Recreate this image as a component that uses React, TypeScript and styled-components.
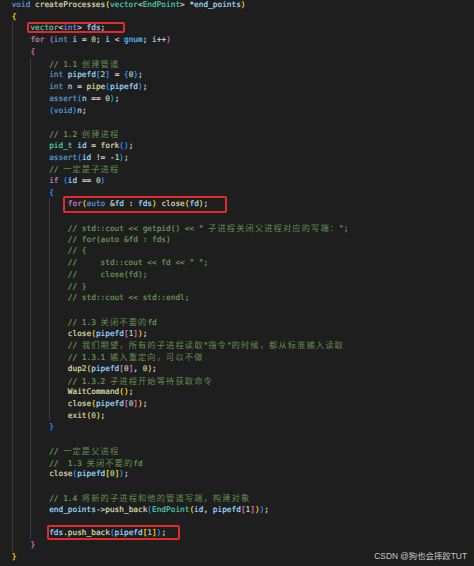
import React from "react";
import styled, { createGlobalStyle } from "styled-components";

const Global = createGlobalStyle`
  html, body { margin: 0; padding: 0; background: #1e1e1e; }
  #root { width: 474px; height: 566px; }
`;

const LH = 11.74;
const CH = 4.68;

const COLORS: Record<string, string> = {
  p: "#d4d4d4",
  k: "#569cd6",
  c: "#c586c0",
  f: "#dcdcaa",
  v: "#9cdcfe",
  t: "#4ec9b0",
  n: "#b5cea8",
  g: "#6a9955",
  m: "#569cd6",
  o: "#4fc1ff",
  "1": "#ffd700",
  "2": "#da70d6",
  "3": "#179fff",
};

const Editor = styled.div`
  position: relative;
  width: 474px;
  height: 566px;
  overflow: hidden;
  background: #1e1e1e;
  box-sizing: border-box;
  padding-left: 11.7px;
  font-family: "DejaVu Sans Mono", "Liberation Mono", monospace;
  font-size: 7.77px;
`;

const Lines = styled.div`
  display: flex;
  flex-direction: column;
  margin-top: -1px;
`;

const Line = styled.div`
  display: flex;
  align-items: stretch;
  height: ${LH}px;
  line-height: ${LH}px;
  white-space: pre;
`;

const Guide = styled.span`
  flex: none;
  width: ${CH * 4}px;
  box-sizing: border-box;
  border-left: 1px solid #3a3a3a;
`;

const Code = styled.span`
  flex: none;
  display: inline-block;
  height: ${LH}px;
  line-height: ${LH}px;
  -webkit-text-stroke: 0.2px currentColor;
`;

const Tok = styled.span<{ $c: string }>`
  color: ${(p) => p.$c};
`;

const Cjk = styled.span`
  font-family: "Noto Sans CJK SC", sans-serif;
  font-size: 8.3px;
  letter-spacing: ${CH * 2 - 8.3}px;
  line-height: ${LH}px;
  -webkit-text-stroke: 0;
  opacity: 0.9;
`;

const Boxed = styled.span<{ $l: number; $r: number; $t: number; $b: number }>`
  position: relative;
  &::after {
    content: "";
    position: absolute;
    left: ${(p) => -p.$l}px;
    right: ${(p) => -p.$r}px;
    top: ${(p) => -p.$t}px;
    bottom: ${(p) => -p.$b}px;
    border: 2px solid #e22a2a;
    border-radius: 2px;
  }
`;

const BoxInner = styled.span`
  display: inline-block;
  height: ${LH}px;
`;

const Watermark = styled.div`
  position: absolute;
  right: 7px;
  bottom: 5px;
  font-family: "Liberation Sans", "Noto Sans CJK SC", sans-serif;
  font-size: 8.4px;
  line-height: 10px;
  color: #e6e6e6;
  opacity: 0.85;
  text-shadow: 0 0 1px rgba(0, 0, 0, 0.6);
`;

type BoxSpec = { l: number; r: number; t: number; b: number };
type Row = [number, string, BoxSpec?];

const rows: Row[] = [
  [0, "«k void» «f createProcesses»«1 (»«t vector»<«t EndPoint»> *«v end_points»«1 )»"],
  [0, "«1 {»"],
  [1, "«t vector»<«k int»> «v fds»;", { l: 3.4, r: 19.7, t: 1, b: 0.6 }],
  [1, "«c for» «2 (»«k int» «v i» = «n 0»; «v i» < «o gnum»; «v i»++«2 )»"],
  [1, "«2 {»"],
  [2, "«g // 1.1 创建管道»"],
  [2, "«k int» «v pipefd»«3 [»«n 2»«3 ]» = «3 {»«n 0»«3 }»;"],
  [2, "«k int» «v n» = «f pipe»«3 (»«v pipefd»«3 )»;"],
  [2, "«m assert»«3 (»«v n» == «n 0»«3 )»;"],
  [2, "«3 (»«k void»«3 )»«v n»;"],
  [2, ""],
  [2, "«g // 1.2 创建进程»"],
  [2, "«t pid_t» «v id» = «f fork»«3 ()»;"],
  [2, "«m assert»«3 (»«v id» != -«n 1»«3 )»;"],
  [2, "«g // 一定是子进程»"],
  [2, "«c if» «3 (»«v id» == «n 0»«3 )»"],
  [2, "«3 {»"],
  [3, "«c for»«1 (»«k auto» &«v fd» : «v fds»«1 )» «f close»«1 (»«v fd»«1 )»;", { l: 5, r: 18.5, t: 3, b: 4.6 }],
  [3, ""],
  [3, "«g // std::cout << getpid() << \" 子进程关闭父进程对应的写端：\";»"],
  [3, "«g // for(auto &fd : fds)»"],
  [3, "«g // {»"],
  [3, "«g //     std::cout << fd << \" \";»"],
  [3, "«g //     close(fd);»"],
  [3, "«g // }»"],
  [3, "«g // std::cout << std::endl;»"],
  [3, ""],
  [3, "«g // 1.3 关闭不要的fd»"],
  [3, "«f close»«1 (»«v pipefd»«2 [»«n 1»«2 ]»«1 )»;"],
  [3, "«g // 我们期望，所有的子进程读取\"指令\"的时候，都从标准输入读取»"],
  [3, "«g // 1.3.1 输入重定向，可以不做»"],
  [3, "«f dup2»«1 (»«v pipefd»«2 [»«n 0»«2 ]», «n 0»«1 )»;"],
  [3, "«g // 1.3.2 子进程开始等待获取命令»"],
  [3, "«f WaitCommand»«1 ()»;"],
  [3, "«f close»«1 (»«v pipefd»«2 [»«n 0»«2 ]»«1 )»;"],
  [3, "«f exit»«1 (»«n 0»«1 )»;"],
  [2, "«3 }»"],
  [2, ""],
  [2, "«g // 一定是父进程»"],
  [2, "«g //  1.3 关闭不要的fd»"],
  [2, "«f close»«3 (»«v pipefd»«1 [»«n 0»«1 ]»«3 )»;"],
  [2, ""],
  [2, "«g // 1.4 将新的子进程和他的管道写端，构建对象»"],
  [2, "«v end_points»->«f push_back»«3 (»«t EndPoint»«1 (»«v id», «v pipefd»«2 [»«n 1»«2 ]»«1 )»«3 )»;"],
  [2, ""],
  [2, "«v fds».«f push_back»«3 (»«v pipefd»«1 [»«n 1»«1 ]»«3 )»;", { l: 2.1, r: 14, t: 3.4, b: 2.9 }],
  [1, "«2 }»"],
  [0, "«1 }»"],
];

type Token = { k: string; text: string };

function parse(s: string): Token[] {
  const out: Token[] = [];
  const re = /«(\S) ([^»]*)»/g;
  let last = 0;
  let m: RegExpExecArray | null;
  while ((m = re.exec(s))) {
    if (m.index > last) out.push({ k: "p", text: s.slice(last, m.index) });
    out.push({ k: m[1], text: m[2] });
    last = re.lastIndex;
  }
  if (last < s.length) out.push({ k: "p", text: s.slice(last) });
  return out;
}

const CJK_RE = /([\u3000-\u9fff\uff00-\uffef]+)/;

function renderText(text: string) {
  return text
    .split(CJK_RE)
    .filter((part) => part.length > 0)
    .map((part, i) => (CJK_RE.test(part) ? <Cjk key={i}>{part}</Cjk> : <React.Fragment key={i}>{part}</React.Fragment>));
}

function CodeLine({ indent, src, box }: { indent: number; src: string; box?: BoxSpec }) {
  const tokens = parse(src).map((t, i) => (
    <Tok key={i} $c={COLORS[t.k] ?? COLORS.p}>
      {renderText(t.text)}
    </Tok>
  ));
  return (
    <Line>
      {Array.from({ length: indent }).map((_, i) => (
        <Guide key={i} />
      ))}
      <Code>
        {box ? (
          <Boxed $l={box.l} $r={box.r} $t={box.t} $b={box.b}>
            <BoxInner>{tokens}</BoxInner>
          </Boxed>
        ) : (
          tokens
        )}
      </Code>
    </Line>
  );
}

export default function App() {
  return (
    <>
      <Global />
      <Editor>
        <Lines>
          {rows.map(([indent, src, box], i) => (
            <CodeLine key={i} indent={indent} src={src} box={box} />
          ))}
        </Lines>
        <Watermark>CSDN @狗也会摔跤TUT</Watermark>
      </Editor>
    </>
  );
}
